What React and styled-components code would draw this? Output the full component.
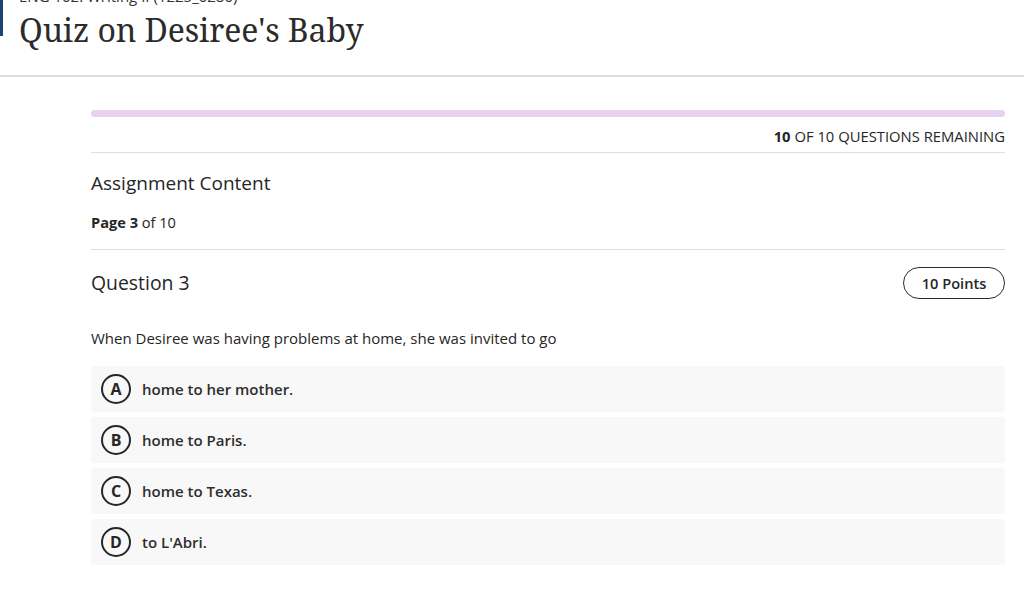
import styled, { createGlobalStyle } from "styled-components";

const GlobalStyle = createGlobalStyle`
  html, body {
    margin: 0;
    padding: 0;
    background: #ffffff;
  }
  body {
    font-family: "Open Sans", "Noto Sans", Arial, sans-serif;
    color: #262626;
    overflow: hidden;
  }
`;

const Page = styled.div`
  width: 1024px;
  height: 601px;
  overflow: hidden;
`;

const Header = styled.header`
  display: flex;
  height: 75px;
  border-bottom: 2px solid #dcdcdc;
  box-sizing: content-box;
`;

const Accent = styled.div`
  width: 3px;
  height: 36px;
  background: #1f4374;
  flex-shrink: 0;
`;

const HeaderText = styled.div`
  padding-left: 16px;
  display: flex;
  flex-direction: column;
`;

const Crumb = styled.div`
  font-size: 15px;
  line-height: 16px;
  margin-top: -12px;
  color: #333;
  white-space: nowrap;
`;

const Title = styled.h1`
  margin: 5px 0 0;
  font-family: "Noto Serif", "DejaVu Serif", "Liberation Serif", serif;
  font-weight: 400;
  font-size: 32px;
  line-height: 41px;
  color: #2b2b2b;
  letter-spacing: -0.1px;
`;

const Content = styled.main`
  margin: 0 19px 0 91px;
  padding-top: 33px;
`;

const Progress = styled.div`
  height: 7px;
  border-radius: 4px;
  background: #e8d3ee;
`;

const Remaining = styled.div`
  text-align: right;
  font-size: 14.8px;
  line-height: 18px;
  margin-top: 10px;
  padding-bottom: 7px;
  border-bottom: 1px solid #dedede;
  color: #262626;
  b {
    font-weight: 700;
  }
`;

const Section = styled.section`
  padding: 17px 0 17px;
  border-bottom: 1px solid #dedede;
`;

const SectionTitle = styled.h2`
  margin: 0;
  font-size: 19px;
  font-weight: 400;
  line-height: 26px;
  color: #262626;
`;

const PageInfo = styled.div`
  margin-top: 16px;
  font-size: 14.6px;
  line-height: 20px;
  b {
    font-weight: 700;
  }
`;

const QuestionHead = styled.div`
  display: flex;
  align-items: center;
  justify-content: space-between;
  margin-top: 17px;
`;

const QuestionTitle = styled.h3`
  margin: 0;
  font-size: 19.4px;
  font-weight: 500;
  line-height: 32px;
`;

const Points = styled.div`
  border: 1px solid #2b2b2b;
  border-radius: 16px;
  height: 30px;
  width: 100px;
  display: flex;
  align-items: center;
  justify-content: center;
  font-size: 14.6px;
  font-weight: 600;
  color: #262626;
`;

const Prompt = styled.p`
  margin: 29px 0 0;
  font-size: 15px;
  line-height: 20px;
`;

const Options = styled.div`
  display: flex;
  flex-direction: column;
  gap: 5px;
  margin-top: 18px;
`;

const Option = styled.div`
  display: flex;
  align-items: center;
  gap: 11px;
  height: 46px;
  padding: 0 10px;
  background: #f8f8f8;
  border-radius: 3px;
`;

const Letter = styled.span`
  width: 26px;
  height: 26px;
  border: 2px solid #262626;
  border-radius: 50%;
  display: flex;
  align-items: center;
  justify-content: center;
  font-size: 16px;
  font-weight: 700;
  flex-shrink: 0;
`;

const OptionText = styled.span`
  font-size: 15px;
  font-weight: 600;
  color: #2e2e2e;
`;

const answers = [
  ["A", "home to her mother."],
  ["B", "home to Paris."],
  ["C", "home to Texas."],
  ["D", "to L'Abri."],
];

export default function App() {
  return (
    <Page>
      <GlobalStyle />
      <Header>
        <Accent />
        <HeaderText>
          <Crumb>ENG 102: Writing II (1225_0280)</Crumb>
          <Title>Quiz on Desiree's Baby</Title>
        </HeaderText>
      </Header>
      <Content>
        <Progress />
        <Remaining>
          <b>10</b> OF 10 QUESTIONS REMAINING
        </Remaining>
        <Section>
          <SectionTitle>Assignment Content</SectionTitle>
          <PageInfo>
            <b>Page 3</b> of 10
          </PageInfo>
        </Section>
        <QuestionHead>
          <QuestionTitle>Question 3</QuestionTitle>
          <Points>10 Points</Points>
        </QuestionHead>
        <Prompt>When Desiree was having problems at home, she was invited to go</Prompt>
        <Options>
          {answers.map(([l, t]) => (
            <Option key={l}>
              <Letter>{l}</Letter>
              <OptionText>{t}</OptionText>
            </Option>
          ))}
        </Options>
      </Content>
    </Page>
  );
}
